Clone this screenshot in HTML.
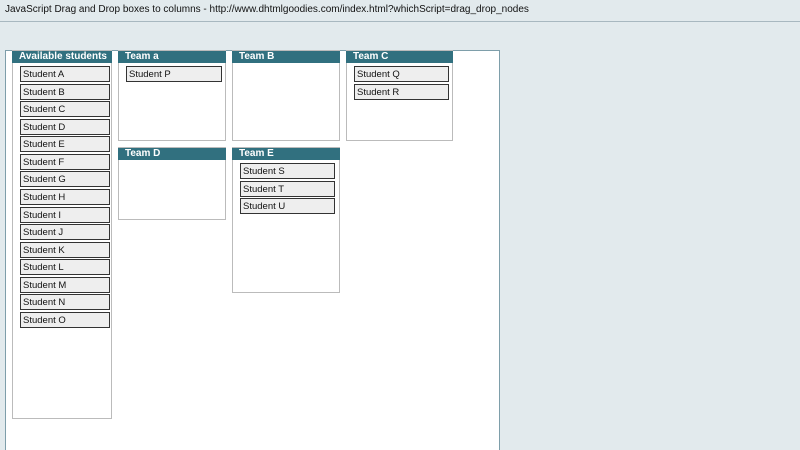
<!DOCTYPE html>
<html style="overflow:hidden"><head><style>
html,body{margin:0;width:800px;height:450px;overflow:hidden}
body{background:#e2eaed;font-family:"Liberation Sans",sans-serif;position:relative}
.t{position:absolute;left:5px;top:4px;font-size:10px;line-height:12px;color:#111}
.hr{position:absolute;left:0;top:21px;width:800px;height:1px;background:#a8b8c0}
.wrap{position:absolute;left:5px;top:50px;width:493px;height:400px;background:#fff;border:1px solid #7e9eaa;border-bottom:none}
.col{position:absolute;background:#fff;border:1px solid #bbb;box-sizing:border-box}
.h{background:#31707f;color:#fff;font-weight:bold;font-size:10px;height:12px;line-height:12px;padding-left:7px;margin:0 -1px;white-space:nowrap;overflow:hidden}
.it{position:absolute;height:16px;box-sizing:border-box;border:1px solid #333;background:#eee;font-size:9.5px;line-height:15px;padding-left:2px;color:#111}
</style></head><body>
<div class="t">JavaScript Drag and Drop boxes to columns - http://www.dhtmlgoodies.com/index.html?whichScript=drag_drop_nodes</div>
<div class="hr"></div>
<div class="wrap"></div>
<div class="col" style="left:12px;top:50px;width:100px;height:369px"><div class="h">Available students</div></div>
<div class="col" style="left:118px;top:50px;width:108px;height:91px"><div class="h">Team a</div></div>
<div class="col" style="left:232px;top:50px;width:108px;height:91px"><div class="h">Team B</div></div>
<div class="col" style="left:346px;top:50px;width:107px;height:91px"><div class="h">Team C</div></div>
<div class="col" style="left:118px;top:147px;width:108px;height:73px"><div class="h">Team D</div></div>
<div class="col" style="left:232px;top:147px;width:108px;height:146px"><div class="h">Team E</div></div>
<div class="it" style="left:20px;top:66px;width:90px">Student A</div>
<div class="it" style="left:20px;top:83.6px;width:90px">Student B</div>
<div class="it" style="left:20px;top:101.1px;width:90px">Student C</div>
<div class="it" style="left:20px;top:118.7px;width:90px">Student D</div>
<div class="it" style="left:20px;top:136.3px;width:90px">Student E</div>
<div class="it" style="left:20px;top:153.9px;width:90px">Student F</div>
<div class="it" style="left:20px;top:171.4px;width:90px">Student G</div>
<div class="it" style="left:20px;top:189px;width:90px">Student H</div>
<div class="it" style="left:20px;top:206.6px;width:90px">Student I</div>
<div class="it" style="left:20px;top:224.1px;width:90px">Student J</div>
<div class="it" style="left:20px;top:241.7px;width:90px">Student K</div>
<div class="it" style="left:20px;top:259.3px;width:90px">Student L</div>
<div class="it" style="left:20px;top:276.9px;width:90px">Student M</div>
<div class="it" style="left:20px;top:294.4px;width:90px">Student N</div>
<div class="it" style="left:20px;top:312px;width:90px">Student O</div>
<div class="it" style="left:126px;top:66px;width:96px">Student P</div>
<div class="it" style="left:354px;top:66px;width:95px">Student Q</div>
<div class="it" style="left:354px;top:84px;width:95px">Student R</div>
<div class="it" style="left:240px;top:163px;width:95px">Student S</div>
<div class="it" style="left:240px;top:181px;width:95px">Student T</div>
<div class="it" style="left:240px;top:198px;width:95px">Student U</div>
</body></html>
